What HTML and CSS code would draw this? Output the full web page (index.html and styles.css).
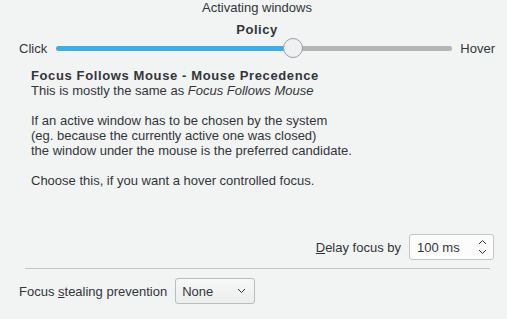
FILE: index.html
```html
<!DOCTYPE html>
<html>
<head>
<meta charset="utf-8">
<link rel="stylesheet" href="styles.css">
</head>
<body>
<div class="page">
  <div class="heading">Activating windows</div>
  <div class="group-title">Policy</div>
  <div class="slider-row">
    <span class="slider-label">Click</span>
    <div class="slider">
      <div class="track-fill"></div>
      <div class="track-rest"></div>
      <div class="handle"></div>
    </div>
    <span class="slider-label">Hover</span>
  </div>
  <div class="desc">
    <div class="desc-title">Focus Follows Mouse - Mouse Precedence</div>
    <div>This is mostly the same as <i>Focus Follows Mouse</i></div>
    <div class="blank"></div>
    <div>If an active window has to be chosen by the system</div>
    <div>(eg. because the currently active one was closed)</div>
    <div>the window under the mouse is the preferred candidate.</div>
    <div class="blank"></div>
    <div>Choose this, if you want a hover controlled focus.</div>
  </div>
  <div class="delay-row">
    <span class="label"><u>D</u>elay focus by</span>
    <div class="spinbox">
      <span>100 ms</span>
      <svg class="spin-arrows" width="9" height="16" viewBox="0 0 9 16">
        <path d="M1 5 L4.5 1.5 L8 5" fill="none" stroke="#31363b" stroke-width="1"/>
        <path d="M1 11 L4.5 14.5 L8 11" fill="none" stroke="#31363b" stroke-width="1"/>
      </svg>
    </div>
  </div>
  <div class="separator"></div>
  <div class="steal-row">
    <span class="label">Focus <u>s</u>tealing prevention</span>
    <div class="combo">
      <span>None</span>
      <svg class="chevron" width="9" height="6" viewBox="0 0 9 6">
        <path d="M1 1 L4.5 4.5 L8 1" fill="none" stroke="#31363b" stroke-width="1"/>
      </svg>
    </div>
  </div>
</div>
</body>
</html>
```

FILE: styles.css
```css
html, body {
  margin: 0;
  padding: 0;
  background: #eff0f1;
}
body {
  font-family: "Liberation Sans", Arial, sans-serif;
  font-size: 13px;
  color: #31363b;
}
.page {
  width: 507px;
  height: 319px;
  box-sizing: border-box;
  position: relative;
  overflow: hidden;
  background: #f2f3f3;
}
.heading {
  text-align: center;
  line-height: 15px;
  padding-top: 0;
  padding-left: 7px;
}
.group-title {
  text-align: center;
  font-weight: bold;
  letter-spacing: 0.5px;
  line-height: 15px;
  margin-top: 7px;
  padding-left: 7px;
}
.slider-row {
  display: flex;
  align-items: center;
  height: 20px;
  margin-top: 1px;
  padding-left: 19px;
  padding-right: 12px;
}
.slider-label {
  line-height: 15px;
}
.slider {
  flex: 1;
  position: relative;
  height: 20px;
  margin: 0 8px 0 9px;
  display: flex;
  align-items: center;
}
.track-fill {
  width: 237px;
  height: 5px;
  background: #3daee9;
  border-radius: 3px 0 0 3px;
}
.track-rest {
  flex: 1;
  height: 5px;
  background: #b4b5b6;
  border-radius: 0 3px 3px 0;
}
.handle {
  position: absolute;
  left: 227px;
  top: 0;
  width: 18px;
  height: 18px;
  border-radius: 50%;
  background: #eef0f1;
  border: 1px solid #9ea0a2;
}
.desc {
  margin-top: 10px;
  padding-left: 31px;
  line-height: 15px;
}
.desc-title {
  font-weight: bold;
  letter-spacing: 0.62px;
}
.blank {
  height: 15px;
}
.delay-row {
  display: flex;
  justify-content: flex-end;
  align-items: center;
  margin-top: 46px;
  padding-right: 13px;
  gap: 8px;
}
.spinbox {
  width: 85px;
  height: 26px;
  box-sizing: border-box;
  border: 1px solid #c3c5c6;
  border-radius: 3px;
  background: #fcfcfc;
  display: flex;
  align-items: center;
  justify-content: space-between;
  padding: 0 6px 0 7px;
}
.spin-arrows {
  display: block;
}
.separator {
  height: 1px;
  background: #c4c5c6;
  margin: 8px 17px 0 25px;
}
.steal-row {
  display: flex;
  align-items: center;
  margin-top: 9px;
  padding-left: 19px;
  gap: 8px;
}
.combo {
  width: 80px;
  height: 26px;
  box-sizing: border-box;
  border: 1px solid #b9bbbc;
  border-radius: 3px;
  background: linear-gradient(#f6f7f7, #eceded);
  display: flex;
  align-items: center;
  justify-content: space-between;
  padding: 0 8px 0 6px;
}
.chevron {
  display: block;
}
```
